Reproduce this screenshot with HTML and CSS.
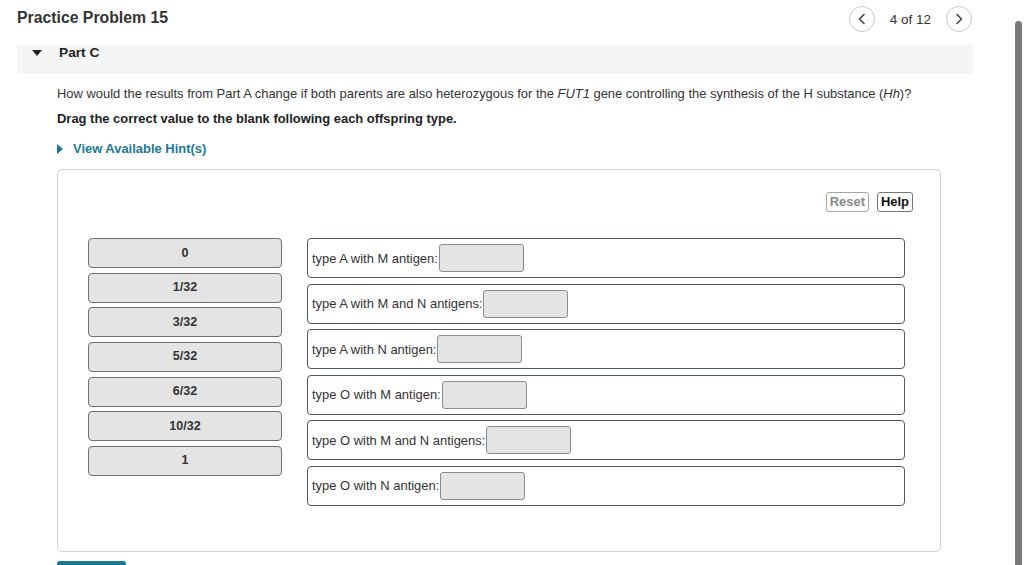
FILE: index.html
```html
<!DOCTYPE html>
<html>
<head>
<meta charset="utf-8">
<link rel="stylesheet" href="styles.css">
</head>
<body>
<div class="page">
  <header class="top">
    <h1 class="title">Practice Problem 15</h1>
    <nav class="pager">
      <span class="circ"><svg width="10" height="12" viewBox="0 0 10 12"><path d="M7 1.5 L2.5 6 L7 10.5" fill="none" stroke="#444" stroke-width="1.6" stroke-linecap="round" stroke-linejoin="round"/></svg></span>
      <span class="count">4 of 12</span>
      <span class="circ"><svg width="10" height="12" viewBox="0 0 10 12"><path d="M3 1.5 L7.5 6 L3 10.5" fill="none" stroke="#444" stroke-width="1.6" stroke-linecap="round" stroke-linejoin="round"/></svg></span>
    </nav>
  </header>
  <div class="part-bar">
    <span class="tri-down"></span>
    <span class="part-title">Part C</span>
  </div>
  <div class="content">
    <p class="question">How would the results from Part A change if both parents are also heterozygous for the <i>FUT1</i> gene controlling the synthesis of the H substance (<i>Hh</i>)?</p>
    <p class="instr">Drag the correct value to the blank following each offspring type.</p>
    <p class="hint"><span class="tri-right"></span>View Available Hint(s)</p>
    <div class="box">
      <div class="tools">
        <span class="btn reset">Reset</span>
        <span class="btn help">Help</span>
      </div>
      <div class="dnd">
        <div class="tiles">
          <div class="tile">0</div>
          <div class="tile">1/32</div>
          <div class="tile">3/32</div>
          <div class="tile">5/32</div>
          <div class="tile">6/32</div>
          <div class="tile">10/32</div>
          <div class="tile">1</div>
        </div>
        <div class="targets">
          <div class="target">type A with M antigen:<span class="drop"></span></div>
          <div class="target">type A with M and N antigens:<span class="drop"></span></div>
          <div class="target">type A with N antigen:<span class="drop"></span></div>
          <div class="target">type O with M antigen:<span class="drop"></span></div>
          <div class="target">type O with M and N antigens:<span class="drop"></span></div>
          <div class="target">type O with N antigen:<span class="drop"></span></div>
        </div>
      </div>
    </div>
    <div class="submit"></div>
  </div>
</div>
<div class="scrollbar"></div>
</body>
</html>
```

FILE: styles.css
```css
html, body {
  margin: 0;
  padding: 0;
  background: #fff;
  overflow: hidden;
}
body {
  font-family: "Liberation Sans", Arial, sans-serif;
  color: #333;
  height: 565px;
}
.page {
  width: 956px;
  margin-left: 17px;
}
.top {
  display: flex;
  align-items: center;
  justify-content: space-between;
  height: 38px;
}
.title {
  margin: 0;
  font-size: 15.8px;
  font-weight: bold;
  color: #333;
  padding-bottom: 2px;
}
.pager {
  display: flex;
  align-items: center;
  margin-right: 1px;
}
.circ {
  width: 24px;
  height: 24px;
  border: 1px solid #c8c8c8;
  border-radius: 50%;
  display: flex;
  align-items: center;
  justify-content: center;
}
.count {
  font-size: 13.5px;
  color: #333;
  margin: 0 15px 0 15px;
}
.part-bar {
  margin-top: 7px;
  height: 29px;
  background: #f5f5f5;
  display: flex;
  align-items: flex-start;
}
.tri-down {
  width: 0;
  height: 0;
  border-left: 5px solid transparent;
  border-right: 5px solid transparent;
  border-top: 6px solid #222;
  margin-left: 15px;
  margin-right: 17px;
  margin-top: 5px;
}
.part-title {
  font-size: 13.7px;
  line-height: 16px;
  font-weight: bold;
  color: #222;
  margin-top: 0;
}
.content {
  padding-left: 40px;
}
.question {
  margin: 12px 0 0 0;
  font-size: 12.95px;
  line-height: 15px;
  color: #333;
}
.instr {
  margin: 10px 0 0 0;
  font-size: 12.95px;
  line-height: 15px;
  font-weight: bold;
  color: #222;
}
.hint {
  margin: 15px 0 0 0;
  font-size: 12.95px;
  line-height: 15px;
  font-weight: bold;
  color: #1b7896;
  display: flex;
  align-items: center;
}
.tri-right {
  width: 0;
  height: 0;
  border-top: 5px solid transparent;
  border-bottom: 5px solid transparent;
  border-left: 6px solid #1b7896;
  margin-right: 10px;
}
.box {
  margin-top: 13px;
  width: 882px;
  height: 381px;
  border: 1px solid #cfcfcf;
  border-radius: 5px;
}
.tools {
  display: flex;
  justify-content: flex-end;
  gap: 8px;
  margin-top: 22px;
  margin-right: 27px;
}
.btn {
  font-size: 12.95px;
  font-weight: bold;
  height: 18px;
  line-height: 18px;
  padding: 0 3px;
  border: 1px solid #999;
  border-radius: 3px;
  background: #fff;
}
.reset {
  color: #8a8a8a;
  border-color: #a5a5a5;
}
.help {
  color: #111;
  border-color: #777;
}
.dnd {
  display: flex;
  margin-top: 26px;
  margin-left: 30px;
}
.tiles {
  width: 194px;
  display: flex;
  flex-direction: column;
  gap: 4.67px;
}
.tile {
  height: 30px;
  box-sizing: border-box;
  border: 1px solid #707070;
  border-radius: 4px;
  background: #e4e4e4;
  font-size: 12.5px;
  font-weight: bold;
  color: #333;
  display: flex;
  align-items: center;
  justify-content: center;
  padding-bottom: 1px;
}
.targets {
  margin-left: 25px;
  width: 598px;
  display: flex;
  flex-direction: column;
  gap: 5.6px;
}
.target {
  height: 40px;
  box-sizing: border-box;
  border: 1px solid #4f5a5c;
  border-radius: 4px;
  display: flex;
  align-items: center;
  padding-left: 4px;
  font-size: 12.95px;
  color: #333;
}
.drop {
  display: inline-block;
  width: 85px;
  height: 28px;
  box-sizing: border-box;
  margin-left: 1px;
  background: #e4e4e4;
  border: 1px solid #8c8c8c;
  border-radius: 3px;
}
.submit {
  margin-top: 9px;
  width: 69px;
  height: 10px;
  background: #1a7896;
  border-radius: 3px 3px 0 0;
}
.scrollbar {
  position: absolute;
  left: 1015px;
  top: 21px;
  width: 7px;
  height: 560px;
  background: #7a7a7a;
  border-radius: 4px;
}
```
